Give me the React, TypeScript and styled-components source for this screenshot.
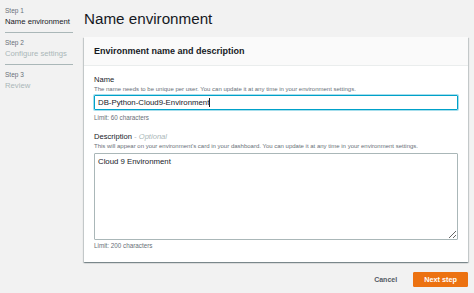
import { createGlobalStyle, styled } from "styled-components";

const steps = [
  { step: "Step 1", title: "Name environment", active: true },
  { step: "Step 2", title: "Configure settings", active: false },
  { step: "Step 3", title: "Review", active: false, last: true },
];

function App() {
  return (
    <>
      <GlobalStyle />
      <Page>
        <Sidebar>
          {steps.map((s) => (
            <StepBlock key={s.step} $last={s.last}>
              <StepLabel>{s.step}</StepLabel>
              <StepTitle $active={s.active}>{s.title}</StepTitle>
            </StepBlock>
          ))}
        </Sidebar>
        <Main>
          <Title>Name environment</Title>
          <Card>
            <CardHeader>Environment name and description</CardHeader>
            <CardBody>
              <Label>Name</Label>
              <Hint>
                The name needs to be unique per user. You can update it at any
                time in your environment settings.
              </Hint>
              <TextInput>
                DB-Python-Cloud9-Environment
                <Caret />
              </TextInput>
              <Limit>Limit: 60 characters</Limit>
              <Label $spaced>
                Description <Optional>- Optional</Optional>
              </Label>
              <Hint>
                This will appear on your environment's card in your dashboard.
                You can update it at any time in your environment settings.
              </Hint>
              <TextArea defaultValue="Cloud 9 Environment" />
              <Limit $tight>Limit: 200 characters</Limit>
            </CardBody>
          </Card>
          <Footer>
            <LinkButton>Cancel</LinkButton>
            <PrimaryButton>Next step</PrimaryButton>
          </Footer>
        </Main>
      </Page>
    </>
  );
}

export default App;

const GlobalStyle = createGlobalStyle`
  html, body {
    margin: 0;
    padding: 0;
    background: #f2f2f2;
    font-family: "Liberation Sans", Arial, sans-serif;
    color: #16191f;
  }
`;

const Page = styled.div`
  display: flex;
  width: 474px;
  height: 293px;
  overflow: hidden;
`;

const Sidebar = styled.div`
  width: 68px;
  padding: 1px 11px 0 5px;
  flex-shrink: 0;
`;

const StepBlock = styled.div<{ $last?: boolean }>`
  padding: 5px 0 5px;
  border-bottom: ${(p) => (p.$last ? "none" : "1px solid #aab7b8")};
`;

const StepLabel = styled.div`
  font-size: 6.5px;
  line-height: 10px;
  color: #687078;
`;

const StepTitle = styled.div<{ $active?: boolean }>`
  font-size: 7.7px;
  line-height: 11px;
  color: ${(p) => (p.$active ? "#16191f" : "#aab7b8")};
`;

const Main = styled.div`
  flex: 1;
  padding-right: 6px;
  display: flex;
  flex-direction: column;
`;

const Title = styled.h1`
  margin: 9px 0 8px;
  font-size: 15.2px;
  line-height: 20px;
  font-weight: 400;
  color: #16191f;
`;

const Card = styled.div`
  background: #ffffff;
  box-shadow: 0 1px 1px 0 rgba(0, 28, 36, 0.3), 1px 1px 1px 0 rgba(0, 28, 36, 0.15),
    -1px 1px 1px 0 rgba(0, 28, 36, 0.15);
`;

const CardHeader = styled.div`
  background: #fafafa;
  height: 28px;
  line-height: 29px;
  padding: 0 10px;
  font-size: 9px;
  font-weight: 700;
  border-bottom: 1px solid #eaeded;
`;

const CardBody = styled.div`
  padding: 9px 10px 12px;
  display: flex;
  flex-direction: column;
`;

const Label = styled.div<{ $spaced?: boolean }>`
  font-size: 7.6px;
  line-height: 10px;
  color: #16191f;
  margin-top: ${(p) => (p.$spaced ? "10px" : "0")};
`;

const Optional = styled.span`
  color: #aab7b8;
  font-style: italic;
`;

const Hint = styled.div`
  font-size: 6px;
  line-height: 8px;
  color: #687078;
`;

const TextInput = styled.div`
  margin-top: 2px;
  height: 11px;
  padding: 1px 3px;
  border: 1px solid #00a1c9;
  border-radius: 1px;
  box-shadow: 0 0 0 1px rgba(0, 161, 201, 0.35);
  font-size: 7.8px;
  line-height: 12px;
  color: #16191f;
  display: flex;
  align-items: center;
`;

const Caret = styled.span`
  display: inline-block;
  width: 1px;
  height: 9px;
  background: #16191f;
`;

const Limit = styled.div<{ $tight?: boolean }>`
  margin-top: ${(p) => (p.$tight ? "2px" : "4px")};
  font-size: 6.3px;
  line-height: 8px;
  color: #687078;
`;

const TextArea = styled.textarea`
  margin-top: 3px;
  height: 87px;
  box-sizing: border-box;
  border: 1px solid #aab7b8;
  border-radius: 1px;
  padding: 3px 3px;
  font-family: "Liberation Sans", Arial, sans-serif;
  font-size: 7.8px;
  line-height: 10px;
  color: #16191f;
  outline: none;
`;

const Footer = styled.div`
  margin-top: 10px;
  display: flex;
  justify-content: flex-end;
  align-items: center;
  gap: 16px;
  padding-right: 0;
`;

const LinkButton = styled.button`
  background: none;
  border: none;
  padding: 0;
  font-family: "Liberation Sans", Arial, sans-serif;
  font-size: 7px;
  font-weight: 700;
  color: #545b64;
`;

const PrimaryButton = styled.button`
  background: #ec7211;
  border: 1px solid #ec7211;
  border-radius: 1px;
  height: 15px;
  padding: 0 10px;
  font-family: "Liberation Sans", Arial, sans-serif;
  font-size: 7.3px;
  font-weight: 700;
  color: #ffffff;
`;
